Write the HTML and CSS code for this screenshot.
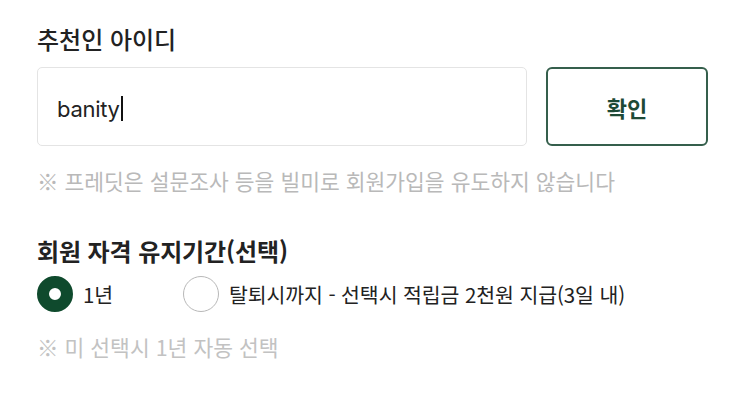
FILE: index.html
```html
<!DOCTYPE html>
<html lang="ko">
<head>
<meta charset="utf-8">
<title>추천인 아이디</title>
<link rel="stylesheet" href="styles.css">
</head>
<body>
<main class="form">
  <section class="field">
    <h2 class="label">추천인 아이디</h2>
    <div class="input-row">
      <div class="input"><span class="input-text">banity</span><span class="caret"></span></div>
      <button class="confirm" type="button">확인</button>
    </div>
    <p class="note">※ 프레딧은 설문조사 등을 빌미로 회원가입을 유도하지 않습니다</p>
  </section>
  <section class="field field-period">
    <h2 class="label label-period">회원 자격 유지기간(선택)</h2>
    <div class="options">
      <label class="option option-first"><span class="radio radio-on"></span><span class="option-text">1년</span></label>
      <label class="option"><span class="radio"></span><span class="option-text">탈퇴시까지 - 선택시 적립금 2천원 지급(3일 내)</span></label>
    </div>
    <p class="note note-auto">※ 미 선택시 1년 자동 선택</p>
  </section>
</main>
</body>
</html>
```
FILE: styles.css
```css
* { box-sizing: border-box; }
html, body { margin: 0; padding: 0; background: #fff; }
body {
  font-family: "Noto Sans CJK KR", "Noto Sans", sans-serif;
  color: #222;
}
.form { padding: 24px 0 0 37px; width: 708px; }
.field { margin: 0; }
.label {
  margin: 0;
  font-size: 24px;
  line-height: 30px;
  font-weight: 500;
  letter-spacing: 0;
  color: #222;
}
.input-row { display: flex; gap: 19px; margin-top: 13px; }
.input {
  width: 490px;
  height: 79px;
  border: 1px solid #e4e4e4;
  border-radius: 5px;
  display: flex;
  align-items: center;
  padding-left: 19px;
  padding-top: 4px;
}
.input-text {
  font-family: Inter, "Noto Sans", sans-serif;
  font-size: 22px;
  color: #222;
  letter-spacing: -0.3px;
}
.caret { width: 2px; height: 25px; background: #111; margin-left: 1px; }
.confirm {
  width: 162px;
  height: 79px;
  border: 2px solid #355f4c;
  border-radius: 6px;
  background: #fff;
  color: #1d4a36;
  font-family: "Noto Sans CJK KR", sans-serif;
  font-size: 22px;
  font-weight: 700;
  padding: 0;
}
.note {
  margin: 22px 0 0;
  font-size: 21.5px;
  line-height: 26px;
  color: #b9b9b9;
  letter-spacing: 0;
}
.field-period { margin-top: 42px; }
.label-period { font-weight: 700; letter-spacing: -0.1px; font-size: 24px; }
.options { display: flex; align-items: center; margin-top: 10px; height: 36px; }
.option { display: flex; align-items: center; gap: 10px; }
.option-first { width: 146px; }
.radio {
  width: 36px; height: 36px; border-radius: 50%;
  border: 1px solid #b8b8b8;
  background: #fff;
  flex: none;
}
.radio-on { border: 12px solid #0f4a2d; }
.option-text { font-size: 20.5px; line-height: 26px; color: #222; letter-spacing: -0.1px; }
.note-auto { margin-top: 22px; color: #c2c2c2; }
```
